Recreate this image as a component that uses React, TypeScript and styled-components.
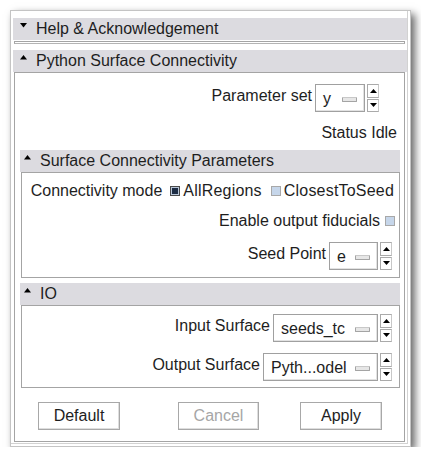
import styled, { createGlobalStyle } from "styled-components";

const GlobalStyle = createGlobalStyle`
  html, body {
    margin: 0;
    background: #fff;
  }
  body {
    font-family: "Liberation Sans", Arial, sans-serif;
    font-size: 16px;
    color: #1e1e1e;
  }
  * {
    box-sizing: border-box;
  }
`;

function Arrow({ down }: { down?: boolean }) {
  return (
    <ArrowIcon width="7" height="5" viewBox="0 0 7 5">
      <polygon points={down ? "0,0 7,0 3.5,4.5" : "0,4.5 7,4.5 3.5,0"} fill="#000" />
    </ArrowIcon>
  );
}

function Spinner() {
  return (
    <SpinColumn>
      <SpinButton>
        <svg width="7" height="4" viewBox="0 0 7 4">
          <polygon points="0,4 7,4 3.5,0" fill="#000" />
        </svg>
      </SpinButton>
      <SpinButton>
        <svg width="7" height="4" viewBox="0 0 7 4">
          <polygon points="0,0 7,0 3.5,4" fill="#000" />
        </svg>
      </SpinButton>
    </SpinColumn>
  );
}

function Field({ label, value, width }: { label: string; value: string; width: number }) {
  return (
    <>
      <Label>{label}</Label>
      <Combo $width={width}>
        <span>{value}</span>
        <MenuIndicator />
      </Combo>
      <Spinner />
    </>
  );
}

export default function App() {
  return (
    <>
      <GlobalStyle />
      <Window>
        <Header>
          <Arrow down />
          Help &amp; Acknowledgement
        </Header>
        <CollapsedFrame />
        <Header $gapTop={6}>
          <Arrow />
          Python Surface Connectivity
        </Header>
        <MainFrame>
          <Row $pr={25} $mt={0} $h={28}>
            <Field label="Parameter set" value="y" width={50} />
          </Row>
          <Row $pr={7} $mt={11} $h={20}>
            Status Idle
          </Row>

          <SubHeader $mt={7}>
            <Arrow />
            Surface Connectivity Parameters
          </SubHeader>
          <SubFrame>
            <Row $pr={5} $mt={0} $h={20}>
              Connectivity mode
              <Check $checked $ml={8} />
              <OptionText>AllRegions</OptionText>
              <Check $ml={9} />
              <OptionText>ClosestToSeed</OptionText>
            </Row>
            <Row $pr={4} $mt={10} $h={20}>
              Enable output fiducials
              <Check $ml={5} />
            </Row>
            <Row $pr={7} $mt={11} $h={28}>
              <Field label="Seed Point" value="e" width={49} />
            </Row>
          </SubFrame>

          <SubHeader $mt={5}>
            <Arrow />
            IO
          </SubHeader>
          <SubFrame $pb={6}>
            <Row $pr={7} $mt={0} $h={28}>
              <Field label="Input Surface" value="seeds_tc" width={105} />
            </Row>
            <Row $pr={7} $mt={11} $h={28}>
              <Field label="Output Surface" value="Pyth...odel" width={115} />
            </Row>
          </SubFrame>

          <ButtonRow>
            <PushButton $w={82}>Default</PushButton>
            <PushButton $w={81} $ml={58} $disabled>
              Cancel
            </PushButton>
            <PushButton $w={82} $ml={41}>
              Apply
            </PushButton>
          </ButtonRow>
        </MainFrame>
      </Window>
    </>
  );
}

const Window = styled.div`
  margin: 10px 0 0 10px;
  width: 401px;
  padding: 7px 3px 4px 2px;
  background: #fff;
  border: 1px solid #c4c4c4;
  box-shadow:
    inset -2px -2px 0 #fff,
    inset -3px -3px 0 #d2d2d2,
    4px 4px 8px rgba(0, 0, 0, 0.6);
`;

const Header = styled.div<{ $gapTop?: number }>`
  display: flex;
  align-items: center;
  gap: 9px;
  height: 22px;
  margin-top: ${(p) => p.$gapTop ?? 0}px;
  padding-left: 7px;
  background: #dcdbe0;
  line-height: 22px;
  white-space: nowrap;
`;

const ArrowIcon = styled.svg`
  align-self: flex-start;
  margin-top: 5px;
  flex: none;
`;

const CollapsedFrame = styled.div`
  height: 3px;
  margin: 1px 2px 0 1px;
  border: 1px solid #a4a4a4;
  border-bottom-color: #b4b4b4;
`;

const MainFrame = styled.div`
  display: flex;
  flex-direction: column;
  margin: 0 2px 0 1px;
  padding: 11px 0 11px;
  border: 1px solid #a4a4a4;
`;

const Row = styled.div<{ $pr: number; $mt: number; $h: number }>`
  display: flex;
  justify-content: flex-end;
  align-items: center;
  height: ${(p) => p.$h}px;
  margin-top: ${(p) => p.$mt}px;
  padding-right: ${(p) => p.$pr}px;
  white-space: nowrap;
`;

const Label = styled.span`
  margin-right: 3px;
  margin-top: -4px;
`;

const Combo = styled.div<{ $width: number }>`
  display: flex;
  align-items: center;
  width: ${(p) => p.$width}px;
  height: 28px;
  padding: 2px 7px 0 7px;
  border: 1px solid #a0a0a0;
  box-shadow: inset -1px -1px 0 #e2e2e2;
  white-space: nowrap;
`;

const MenuIndicator = styled.span`
  width: 15px;
  height: 5px;
  margin-left: auto;
  border: 1px solid #a4a4a4;
  border-top-color: #c8c8c8;
  border-radius: 1px;
  background: #e6e6e6;
  flex: none;
`;

const SpinColumn = styled.div`
  display: flex;
  flex-direction: column;
  gap: 1px;
  width: 12px;
  height: 28px;
  margin-left: 2px;
`;

const SpinButton = styled.div`
  flex: 1;
  display: flex;
  align-items: center;
  justify-content: center;
  border: 1px solid #aaa;
  border-right-color: #c8c8c8;
  background: #fff;
`;

const SubHeader = styled.div<{ $mt: number }>`
  display: flex;
  align-items: center;
  gap: 9px;
  height: 22px;
  margin: ${(p) => p.$mt}px 4px 0 5px;
  padding-left: 4px;
  background: #dcdbe0;
  line-height: 22px;
  white-space: nowrap;
`;

const SubFrame = styled.div<{ $pb?: number }>`
  display: flex;
  flex-direction: column;
  margin: 0 4px 0 6px;
  padding: 8px 0 ${(p) => p.$pb ?? 7}px;
  border: 1px solid #a4a4a4;
`;

const Check = styled.span<{ $checked?: boolean; $ml: number }>`
  position: relative;
  width: 10px;
  height: 10px;
  margin-left: ${(p) => p.$ml}px;
  border: 1px solid ${(p) => (p.$checked ? "#4a4a4a" : "#a8a8a8")};
  background: ${(p) => (p.$checked ? "#b8c6d8" : "#c6d6ea")};
  flex: none;

  &::after {
    content: "";
    display: ${(p) => (p.$checked ? "block" : "none")};
    position: absolute;
    inset: 1px;
    background: #1c2c44;
  }
`;

const OptionText = styled.span`
  margin-left: 3px;
  letter-spacing: 0.2px;
`;

const ButtonRow = styled.div`
  display: flex;
  margin-top: 14px;
  padding-left: 23px;
`;

const PushButton = styled.div<{ $w: number; $ml?: number; $disabled?: boolean }>`
  display: flex;
  align-items: center;
  justify-content: center;
  width: ${(p) => p.$w}px;
  height: 28px;
  margin-left: ${(p) => p.$ml ?? 0}px;
  border: 1px solid #a8a8a8;
  box-shadow: inset -1px -1px 0 #dedede;
  color: ${(p) => (p.$disabled ? "#a6a6a6" : "#1e1e1e")};
`;
